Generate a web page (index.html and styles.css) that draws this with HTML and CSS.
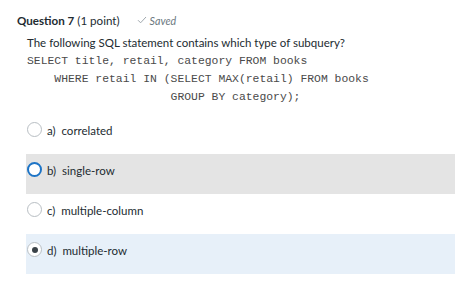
FILE: index.html
```html
<!DOCTYPE html>
<html lang="en">
<head>
    <meta charset="UTF-8">
    <title>Question 7</title>
    <link rel="stylesheet" href="styles.css">
</head>
<body>
    <div class="question">
        <div class="question-header">
            <h2 class="question-title"><strong>Question 7</strong> (1 point)</h2>
            <span class="saved">
                <svg class="check" width="10" height="8" viewBox="0 0 10 8"><path d="M1 4.2 L3.6 6.8 L9 1" fill="none" stroke="#a0a8ae" stroke-width="1"/></svg>
                Saved
            </span>
        </div>
        <div class="question-body">
            <p class="question-text">The following SQL statement contains which type of subquery?</p>
<pre class="sql">SELECT title, retail, category FROM books
    WHERE retail IN (SELECT MAX(retail) FROM books
                     GROUP BY category);</pre>
            <ul class="answers">
                <li class="answer">
                    <span class="radio"></span>
                    <span class="label">a)&nbsp; correlated</span>
                </li>
                <li class="answer answer-hover">
                    <span class="radio radio-focus"></span>
                    <span class="label">b)&nbsp; single-row</span>
                </li>
                <li class="answer">
                    <span class="radio"></span>
                    <span class="label">c)&nbsp; multiple-column</span>
                </li>
                <li class="answer answer-selected">
                    <span class="radio radio-checked"></span>
                    <span class="label">d)&nbsp; multiple-row</span>
                </li>
            </ul>
        </div>
    </div>
</body>
</html>
```

FILE: styles.css
```css
body {
    margin: 0;
    background: #fff;
    font-family: Lato, "Liberation Sans", sans-serif;
    color: #2d3b45;
}
.question {
    padding: 10px 0 0 17px;
}
.question-header {
    display: flex;
    align-items: center;
    height: 20px;
}
.question-title {
    margin: 0;
    font-size: 11.6px;
    font-weight: normal;
    color: #222b31;
}
.question-title strong {
    font-weight: bold;
}
.saved {
    margin-left: 17px;
    display: flex;
    align-items: center;
    gap: 3px;
    font-size: 10.7px;
    font-style: italic;
    color: #6b7780;
}
.question-body {
    margin-left: 9px;
    width: 429px;
}
.question-text {
    margin: 4px 0 0 1px;
    font-size: 11.5px;
    line-height: 18px;
    color: #222b31;
}
.sql {
    margin: 0 0 0 1px;
    font-family: "Liberation Mono", "Courier New", monospace;
    font-size: 11.4px;
    line-height: 18px;
    color: #4a4a4a;
}
.answers {
    list-style: none;
    margin: 8px 0 0 0;
    padding: 0;
}
.answer {
    display: flex;
    align-items: flex-start;
    gap: 5px;
    height: 40px;
    box-sizing: border-box;
    padding: 8px 0 0 1px;
    font-size: 11.5px;
    line-height: 18px;
    color: #222b31;
}
.answer-hover {
    background: #e4e4e4;
}
.answer-selected {
    background: #e7f0f9;
}
.radio {
    box-sizing: border-box;
    flex: none;
    width: 15px;
    height: 15px;
    border: 1px solid #b8bec3;
    border-radius: 50%;
    background: #fff;
    display: flex;
    align-items: center;
    justify-content: center;
}
.radio-focus {
    border: 2px solid #1d74c6;
}
.radio-checked::after {
    content: "";
    width: 6px;
    height: 6px;
    border-radius: 50%;
    background: #3a4248;
}
```
